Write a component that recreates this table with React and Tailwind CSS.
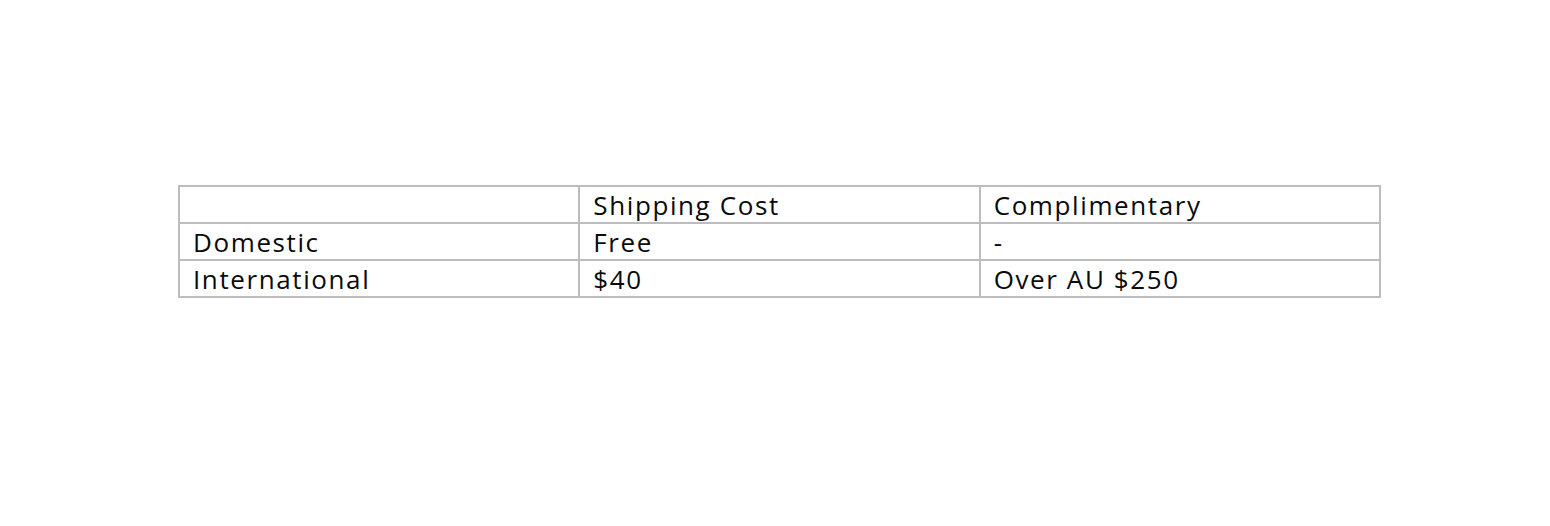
const rows = [
  ["", "Shipping Cost", "Complimentary"],
  ["Domestic", "Free", "-"],
  ["International", "$40", "Over AU $250"],
];

export default function App() {
  return (
    <div className="min-h-screen bg-white pt-[185px] pl-[178px]">
      <table className="w-[1203px] border-collapse table-fixed text-[26px] leading-[33px] tracking-[1.6px] text-[#0a0a0a] font-['Open_Sans','Noto_Sans',sans-serif]">
        <tbody>
          {rows.map((row, i) => (
            <tr key={i}>
              {row.map((cell, j) => (
                <td key={j} className="h-[37px] border-2 border-[#bdbdbd] px-[13px] pt-[2px] pb-0 align-middle">
                  {cell}
                </td>
              ))}
            </tr>
          ))}
        </tbody>
      </table>
    </div>
  );
}
